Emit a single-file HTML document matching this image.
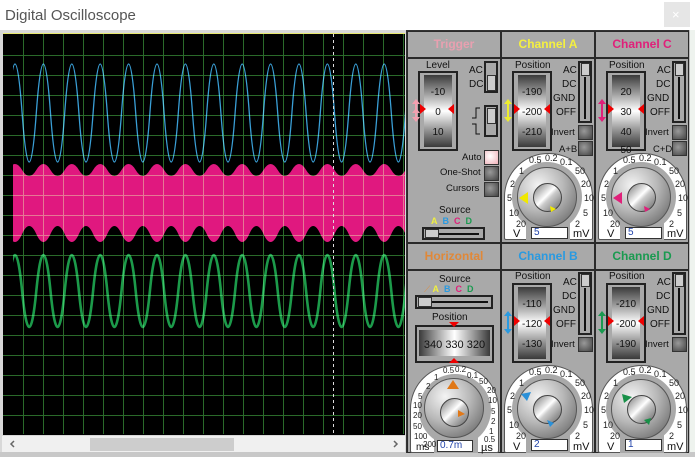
<!DOCTYPE html>
<html><head><meta charset="utf-8">
<style>
*{margin:0;padding:0;box-sizing:border-box}
body{width:695px;height:457px;overflow:hidden;background:#fff;font-family:"Liberation Sans",sans-serif;position:relative}
.a{position:absolute}
.t{position:absolute;font-size:10px;color:#111;white-space:nowrap;line-height:1}
.hd{position:absolute;font-weight:bold;font-size:12px;text-align:center;line-height:26px}
.col{position:absolute;border:1px solid #2a2a2a;background:#a9a9a9}
.gauge{position:absolute;background:#a9a9a9;border:2px solid #222}
.gin{position:absolute;left:4px;right:4px;top:2px;bottom:2px;background:linear-gradient(to bottom,#3a3a3a,#9a9a9a 25%,#fff 50%,#9a9a9a 75%,#3a3a3a)}
.gin.h{background:linear-gradient(to right,#3a3a3a,#a0a0a0 25%,#fff 50%,#a0a0a0 75%,#3a3a3a)}
.gl{position:absolute;font-size:10px;color:#111;width:100%;text-align:center;line-height:1}
.sl{position:absolute;border:2px solid #222;background:#a9a9a9}
.btn{position:absolute;width:15px;height:15px;border:1px solid #333;background:radial-gradient(circle at 40% 40%,#999,#444)}
.dial{position:absolute;width:89px;height:87px}
.dome{position:absolute;left:0;top:0;width:89px;height:87px;background:#fff;border:1px solid #555;border-radius:44px 44px 2px 2px/44px 44px 2px 2px}
.knob{position:absolute;width:60px;height:60px;border-radius:50%;background:radial-gradient(circle at 35% 30%,#f4f4f4,#b8b8b8 45%,#6a6a6a 90%);border:1px solid #555}
.cap{position:absolute;width:29px;height:29px;border-radius:50%;background:linear-gradient(135deg,#777,#fff 45%,#ccc 55%,#666);border:1px solid #444}
.n{position:absolute;font-size:9px;color:#222;line-height:1;white-space:nowrap}
.hz .n{font-size:8px}
.box{position:absolute;background:#fff;border:1px solid #333;font-size:10px;color:#2244aa;padding-left:2px;line-height:10px}
</style></head><body>
<div class="t" style="left:5px;top:8px;font-size:15px;color:#555">Digital Oscilloscope</div>
<div class="a" style="left:664px;top:2px;width:26px;height:25px;background:#e6e6e6"></div>
<div class="t" style="left:672px;top:8px;font-size:13px;color:#fff">×</div>
<div class="a" style="left:0;top:30px;width:407px;height:427px;background:#d8d8d8"></div>
<div class="a" style="left:689px;top:30px;width:6px;height:427px;background:#eef3ee;border-left:1px solid #bbb"></div>
<div class="a" style="left:0;top:452px;width:695px;height:5px;background:#c8c8c8"></div>
<svg class="a" style="left:0;top:0" width="407" height="457">
<defs><clipPath id="cp"><rect x="13" y="34" width="392" height="400"/></clipPath></defs>
<rect x="3" y="33" width="402" height="402" fill="#000"/>
<line x1="3" y1="33.5" x2="405" y2="33.5" stroke="#e8e870" stroke-width="1"/>
<g clip-path="url(#cp)">
<path fill="#e0187f" d="M7.9,170 Q15,158 22.1,170 t14.2,0 t14.2,0 t14.2,0 t14.2,0 t14.2,0 t14.2,0 t14.2,0 t14.2,0 t14.2,0 t14.2,0 t14.2,0 t14.2,0 t14.2,0 t14.2,0 t14.2,0 t14.2,0 t14.2,0 t14.2,0 t14.2,0 t14.2,0 t14.2,0 t14.2,0 t14.2,0 t14.2,0 t14.2,0 t14.2,0 t14.2,0 t14.2,0 L419.7,234 Q412.6,250 405.5,234 t-14.2,0 t-14.2,0 t-14.2,0 t-14.2,0 t-14.2,0 t-14.2,0 t-14.2,0 t-14.2,0 t-14.2,0 t-14.2,0 t-14.2,0 t-14.2,0 t-14.2,0 t-14.2,0 t-14.2,0 t-14.2,0 t-14.2,0 t-14.2,0 t-14.2,0 t-14.2,0 t-14.2,0 t-14.2,0 t-14.2,0 t-14.2,0 t-14.2,0 t-14.2,0 t-14.2,0 t-14.2,0 Z"/>
<path fill="none" stroke="#3a9fd6" stroke-width="1.3" d="M7.9,113 Q15,15 22.1,113 t14.2,0 t14.2,0 t14.2,0 t14.2,0 t14.2,0 t14.2,0 t14.2,0 t14.2,0 t14.2,0 t14.2,0 t14.2,0 t14.2,0 t14.2,0 t14.2,0 t14.2,0 t14.2,0 t14.2,0 t14.2,0 t14.2,0 t14.2,0 t14.2,0 t14.2,0 t14.2,0 t14.2,0 t14.2,0 t14.2,0 t14.2,0 t14.2,0"/>
<path fill="none" stroke="#1c9a4a" stroke-width="2.6" d="M7.9,291 Q15,219 22.1,291 t14.2,0 t14.2,0 t14.2,0 t14.2,0 t14.2,0 t14.2,0 t14.2,0 t14.2,0 t14.2,0 t14.2,0 t14.2,0 t14.2,0 t14.2,0 t14.2,0 t14.2,0 t14.2,0 t14.2,0 t14.2,0 t14.2,0 t14.2,0 t14.2,0 t14.2,0 t14.2,0 t14.2,0 t14.2,0 t14.2,0 t14.2,0 t14.2,0"/>
</g>
<g stroke="#2a6a2a" stroke-width="1" style="mix-blend-mode:screen">
<path d="M23.5,34V434M43.5,34V434M63.5,34V434M83.5,34V434M103.5,34V434M123.5,34V434M143.5,34V434M163.5,34V434M183.5,34V434M203.5,34V434M223.5,34V434M243.5,34V434M263.5,34V434M283.5,34V434M303.5,34V434M323.5,34V434M343.5,34V434M363.5,34V434M383.5,34V434M403.5,34V434"/>
<path d="M3,55.5H405M3,75.5H405M3,95.5H405M3,115.5H405M3,135.5H405M3,155.5H405M3,175.5H405M3,195.5H405M3,215.5H405M3,235.5H405M3,255.5H405M3,275.5H405M3,295.5H405M3,315.5H405M3,335.5H405M3,355.5H405M3,375.5H405M3,395.5H405M3,415.5H405"/>
</g>
<line x1="333.5" y1="34" x2="333.5" y2="434" stroke="#ddd" stroke-dasharray="3,3"/>
<rect x="2" y="436" width="403" height="16" fill="#f0f0f0"/>
<rect x="90" y="438" width="144" height="13" fill="#cdcdcd"/>
<path d="M14,441 l-3,3 3,3 M394,441 l3,3 -3,3" stroke="#666" stroke-width="1.5" fill="none"/>
</svg>

<div class="a" style="left:406px;top:30px;width:283px;height:423px;background:#a9a9a9;border:1px solid #333"></div>
<div class="col" style="left:407px;top:31px;width:94px;height:27px"></div>
<div class="col" style="left:501px;top:31px;width:94px;height:27px"></div>
<div class="col" style="left:595px;top:31px;width:94px;height:27px"></div>
<div class="col" style="left:407px;top:58px;width:94px;height:185px"></div>
<div class="col" style="left:501px;top:58px;width:94px;height:185px"></div>
<div class="col" style="left:595px;top:58px;width:94px;height:185px"></div>
<div class="col" style="left:407px;top:243px;width:94px;height:27px"></div>
<div class="col" style="left:501px;top:243px;width:94px;height:27px"></div>
<div class="col" style="left:595px;top:243px;width:94px;height:27px"></div>
<div class="col" style="left:407px;top:270px;width:94px;height:183px"></div>
<div class="col" style="left:501px;top:270px;width:94px;height:183px"></div>
<div class="col" style="left:595px;top:270px;width:94px;height:183px"></div>
<div class="hd" style="left:407px;top:31px;width:94px;color:#e8a0b0">Trigger</div>
<div class="hd" style="left:501px;top:31px;width:94px;color:#f4f040">Channel A</div>
<div class="hd" style="left:595px;top:31px;width:94px;color:#e0207a">Channel C</div>
<div class="hd" style="left:407px;top:243px;width:94px;color:#e08838">Horizontal</div>
<div class="hd" style="left:501px;top:243px;width:94px;color:#2a9ae0">Channel B</div>
<div class="hd" style="left:595px;top:243px;width:94px;color:#1a9a50">Channel D</div>

<div class="t" style="left:426px;top:61px">Level</div>
<div class="gauge" style="left:418px;top:71px;width:40px;height:80px"><div class="gin"><div class="gl" style="top:13px">-10</div><div class="gl" style="top:33px">0</div><div class="gl" style="top:53px">10</div></div></div>
<svg class="a" style="left:408px;top:96px" width="56" height="28"><path d="M8,12 l-4,5 8,0z M8,3 l-4,5 8,0z M4,21 l4,5 4,-5z" fill="#f2a0b0"/><rect x="7" y="6" width="2" height="16" fill="#f2a0b0"/><path d="M12,8 l6,5 -6,5z" fill="#e00"/><path d="M46,8 l-6,5 6,5z" fill="#e00"/></svg>
<div class="t" style="left:469px;top:66px">AC</div><div class="t" style="left:469px;top:80px">DC</div>
<div class="sl" style="left:484px;top:61px;width:14px;height:32px"><div class="a" style="left:1px;top:12px;width:9px;height:16px;background:#ccc;border:1px solid #333"></div></div>
<svg class="a" style="left:470px;top:106px" width="14" height="30"><path d="M10,2 H6 V12 H2 M2,18 H6 V28 H10" stroke="#111" fill="none"/></svg>
<div class="sl" style="left:484px;top:105px;width:14px;height:32px"><div class="a" style="left:1px;top:1px;width:9px;height:16px;background:#ccc;border:1px solid #333"></div></div>
<div class="t" style="left:462px;top:153px;font-size:9.5px">Auto</div>
<div class="btn" style="left:484px;top:150px;background:radial-gradient(circle at 40% 40%,#fff,#f0b0b8)"></div>
<div class="t" style="left:440px;top:168px;font-size:9.5px">One-Shot</div><div class="btn" style="left:484px;top:166px"></div>
<div class="t" style="left:446px;top:184px;font-size:9.5px">Cursors</div><div class="btn" style="left:484px;top:182px"></div>
<div class="t" style="left:439px;top:206px">Source</div>
<div class="t" style="left:431px;top:217px;font-size:9px;font-weight:bold"><span style="color:#f0f040">A</span>&nbsp; <span style="color:#2a9ae0">B</span>&nbsp; <span style="color:#e0207a">C</span>&nbsp; <span style="color:#1a9a50">D</span></div>
<div class="sl" style="left:422px;top:227px;width:63px;height:13px"><div class="a" style="left:3px;top:4px;width:52px;height:2px;background:#111"></div><div class="a" style="left:1px;top:0;width:14px;height:9px;background:#ccc;border:1px solid #333"></div></div>

<div class="t" style="left:515px;top:61px">Position</div>
<div class="gauge" style="left:512px;top:71px;width:40px;height:80px"><div class="gin"><div class="gl" style="top:13px">-190</div><div class="gl" style="top:33px">-200</div><div class="gl" style="top:53px">-210</div></div></div>
<svg class="a" style="left:502px;top:96px" width="56" height="28"><path d="M6,3 l-4,5 8,0z M2,21 l4,5 4,-5z" fill="#ecec30"/><rect x="5" y="6" width="2" height="16" fill="#ecec30"/><path d="M12,8 l6,5 -6,5z" fill="#e00"/><path d="M48,8 l-6,5 6,5z" fill="#e00"/></svg>
<div class="t" style="left:563px;top:66px">AC</div><div class="t" style="left:562px;top:80px">DC</div><div class="t" style="left:553px;top:94px">GND</div><div class="t" style="left:556px;top:108px">OFF</div>
<div class="sl" style="left:578px;top:61px;width:14px;height:62px"><div class="a" style="left:4px;top:14px;width:2px;height:42px;background:#111"></div><div class="a" style="left:1px;top:0;width:9px;height:13px;background:#ccc;border:1px solid #333"></div></div>
<div class="t" style="left:551px;top:128px;font-size:9.5px">Invert</div><div class="btn" style="left:578px;top:125px"></div>
<div class="t" style="left:559px;top:145px;font-size:9.5px">A+B</div><div class="btn" style="left:578px;top:141px"></div>

<div class="t" style="left:609px;top:61px">Position</div>
<div class="gauge" style="left:606px;top:71px;width:40px;height:80px"><div class="gin"><div class="gl" style="top:13px">20</div><div class="gl" style="top:33px">30</div><div class="gl" style="top:53px">40</div><div class="gl" style="top:71px">50</div></div></div>
<svg class="a" style="left:596px;top:96px" width="56" height="28"><path d="M6,3 l-4,5 8,0z M2,21 l4,5 4,-5z" fill="#e0207a"/><rect x="5" y="6" width="2" height="16" fill="#e0207a"/><path d="M12,8 l6,5 -6,5z" fill="#e00"/><path d="M48,8 l-6,5 6,5z" fill="#e00"/></svg>
<div class="t" style="left:657px;top:66px">AC</div><div class="t" style="left:656px;top:80px">DC</div><div class="t" style="left:647px;top:94px">GND</div><div class="t" style="left:650px;top:108px">OFF</div>
<div class="sl" style="left:672px;top:61px;width:14px;height:62px"><div class="a" style="left:4px;top:14px;width:2px;height:42px;background:#111"></div><div class="a" style="left:1px;top:0;width:9px;height:13px;background:#ccc;border:1px solid #333"></div></div>
<div class="t" style="left:645px;top:128px;font-size:9.5px">Invert</div><div class="btn" style="left:672px;top:125px"></div>
<div class="t" style="left:653px;top:145px;font-size:9.5px">C+D</div><div class="btn" style="left:672px;top:141px"></div>

<div class="t" style="left:439px;top:275px">Source</div>
<div class="t" style="left:424px;top:285px;font-size:9px;font-weight:bold"><span style="color:#d8904a;font-weight:normal">⟋</span> <span style="color:#f0f040">A</span>&nbsp; <span style="color:#2a9ae0">B</span>&nbsp; <span style="color:#e0207a">C</span>&nbsp; <span style="color:#1a9a50">D</span></div>
<div class="sl" style="left:415px;top:295px;width:78px;height:14px"><div class="a" style="left:3px;top:4px;width:68px;height:2px;background:#111"></div><div class="a" style="left:1px;top:0;width:14px;height:10px;background:#ccc;border:1px solid #333"></div></div>
<div class="t" style="left:432px;top:313px">Position</div>
<div class="gauge" style="left:415px;top:325px;width:79px;height:38px"><div class="gin h" style="left:2px;right:2px;top:3px;bottom:5px"><div class="gl" style="top:10px;font-size:11px">340 330 320</div></div></div>
<svg class="a" style="left:448px;top:322px" width="12" height="44"><path d="M1,0 h10 l-5,5z M1,41 h10 l-5,-5z" fill="#e00"/></svg>

<div class="t" style="left:515px;top:272px">Position</div>
<div class="gauge" style="left:512px;top:283px;width:40px;height:80px"><div class="gin"><div class="gl" style="top:13px">-110</div><div class="gl" style="top:33px">-120</div><div class="gl" style="top:53px">-130</div></div></div>
<svg class="a" style="left:502px;top:308px" width="56" height="28"><path d="M6,3 l-4,5 8,0z M2,21 l4,5 4,-5z" fill="#2a9ae0"/><rect x="5" y="6" width="2" height="16" fill="#2a9ae0"/><path d="M12,8 l6,5 -6,5z" fill="#e00"/><path d="M48,8 l-6,5 6,5z" fill="#e00"/></svg>
<div class="t" style="left:563px;top:278px">AC</div><div class="t" style="left:562px;top:292px">DC</div><div class="t" style="left:553px;top:306px">GND</div><div class="t" style="left:556px;top:320px">OFF</div>
<div class="sl" style="left:578px;top:272px;width:14px;height:63px"><div class="a" style="left:4px;top:14px;width:2px;height:43px;background:#111"></div><div class="a" style="left:1px;top:0;width:9px;height:13px;background:#ccc;border:1px solid #333"></div></div>
<div class="t" style="left:551px;top:340px;font-size:9.5px">Invert</div><div class="btn" style="left:578px;top:337px"></div>

<div class="t" style="left:609px;top:272px">Position</div>
<div class="gauge" style="left:606px;top:283px;width:40px;height:80px"><div class="gin"><div class="gl" style="top:13px">-210</div><div class="gl" style="top:33px">-200</div><div class="gl" style="top:53px">-190</div></div></div>
<svg class="a" style="left:596px;top:308px" width="56" height="28"><path d="M6,3 l-4,5 8,0z M2,21 l4,5 4,-5z" fill="#1a9a50"/><rect x="5" y="6" width="2" height="16" fill="#1a9a50"/><path d="M12,8 l6,5 -6,5z" fill="#e00"/><path d="M48,8 l-6,5 6,5z" fill="#e00"/></svg>
<div class="t" style="left:657px;top:278px">AC</div><div class="t" style="left:656px;top:292px">DC</div><div class="t" style="left:647px;top:306px">GND</div><div class="t" style="left:650px;top:320px">OFF</div>
<div class="sl" style="left:672px;top:272px;width:14px;height:63px"><div class="a" style="left:4px;top:14px;width:2px;height:43px;background:#111"></div><div class="a" style="left:1px;top:0;width:9px;height:13px;background:#ccc;border:1px solid #333"></div></div>
<div class="t" style="left:645px;top:340px;font-size:9.5px">Invert</div><div class="btn" style="left:672px;top:337px"></div>

<div class="dial" style="left:504px;top:153px">
 <div class="dome"></div>
 <div class="a" style="left:8px;top:9px;width:70px;height:70px;border-radius:50%;background:#a9a9a9"></div>
 <div class="a" style="left:22px;top:44px;width:44px;height:43px;background:#a9a9a9"></div>
 <div class="n" style="left:25px;top:3px">0.5</div><div class="n" style="left:41px;top:1px">0.2</div><div class="n" style="left:56px;top:5px">0.1</div><div class="n" style="left:71px;top:14px">50</div><div class="n" style="left:15px;top:14px">1</div><div class="n" style="left:6px;top:27px">2</div><div class="n" style="left:77px;top:27px">20</div><div class="n" style="left:3px;top:41px">5</div><div class="n" style="left:80px;top:41px">10</div><div class="n" style="left:5px;top:56px">10</div><div class="n" style="left:79px;top:56px">5</div><div class="n" style="left:12px;top:67px">20</div><div class="n" style="left:71px;top:67px">2</div>
 <div class="t" style="left:9px;top:76px;font-size:11px">V</div><div class="t" style="left:69px;top:76px;font-size:11px">mV</div>
 <div class="knob" style="left:13px;top:14px"></div><div class="cap" style="left:29px;top:30px"></div>
</div>
<div class="dial" style="left:598px;top:153px">
 <div class="dome"></div>
 <div class="a" style="left:8px;top:9px;width:70px;height:70px;border-radius:50%;background:#a9a9a9"></div>
 <div class="a" style="left:22px;top:44px;width:44px;height:43px;background:#a9a9a9"></div>
 <div class="n" style="left:25px;top:3px">0.5</div><div class="n" style="left:41px;top:1px">0.2</div><div class="n" style="left:56px;top:5px">0.1</div><div class="n" style="left:71px;top:14px">50</div><div class="n" style="left:15px;top:14px">1</div><div class="n" style="left:6px;top:27px">2</div><div class="n" style="left:77px;top:27px">20</div><div class="n" style="left:3px;top:41px">5</div><div class="n" style="left:80px;top:41px">10</div><div class="n" style="left:5px;top:56px">10</div><div class="n" style="left:79px;top:56px">5</div><div class="n" style="left:12px;top:67px">20</div><div class="n" style="left:71px;top:67px">2</div>
 <div class="t" style="left:9px;top:76px;font-size:11px">V</div><div class="t" style="left:69px;top:76px;font-size:11px">mV</div>
 <div class="knob" style="left:13px;top:14px"></div><div class="cap" style="left:29px;top:30px"></div>
</div>
<div class="dial" style="left:504px;top:365px;height:88px">
 <div class="dome" style="height:88px"></div>
 <div class="a" style="left:8px;top:9px;width:70px;height:70px;border-radius:50%;background:#a9a9a9"></div>
 <div class="a" style="left:22px;top:44px;width:44px;height:44px;background:#a9a9a9"></div>
 <div class="n" style="left:25px;top:3px">0.5</div><div class="n" style="left:41px;top:1px">0.2</div><div class="n" style="left:56px;top:5px">0.1</div><div class="n" style="left:71px;top:14px">50</div><div class="n" style="left:15px;top:14px">1</div><div class="n" style="left:6px;top:27px">2</div><div class="n" style="left:77px;top:27px">20</div><div class="n" style="left:3px;top:41px">5</div><div class="n" style="left:80px;top:41px">10</div><div class="n" style="left:5px;top:56px">10</div><div class="n" style="left:79px;top:56px">5</div><div class="n" style="left:12px;top:67px">20</div><div class="n" style="left:71px;top:67px">2</div>
 <div class="t" style="left:9px;top:77px;font-size:11px">V</div><div class="t" style="left:69px;top:77px;font-size:11px">mV</div>
 <div class="knob" style="left:13px;top:14px"></div><div class="cap" style="left:29px;top:30px"></div>
</div>
<div class="dial" style="left:598px;top:365px;height:88px">
 <div class="dome" style="height:88px"></div>
 <div class="a" style="left:8px;top:9px;width:70px;height:70px;border-radius:50%;background:#a9a9a9"></div>
 <div class="a" style="left:22px;top:44px;width:44px;height:44px;background:#a9a9a9"></div>
 <div class="n" style="left:25px;top:3px">0.5</div><div class="n" style="left:41px;top:1px">0.2</div><div class="n" style="left:56px;top:5px">0.1</div><div class="n" style="left:71px;top:14px">50</div><div class="n" style="left:15px;top:14px">1</div><div class="n" style="left:6px;top:27px">2</div><div class="n" style="left:77px;top:27px">20</div><div class="n" style="left:3px;top:41px">5</div><div class="n" style="left:80px;top:41px">10</div><div class="n" style="left:5px;top:56px">10</div><div class="n" style="left:79px;top:56px">5</div><div class="n" style="left:12px;top:67px">20</div><div class="n" style="left:71px;top:67px">2</div>
 <div class="t" style="left:9px;top:77px;font-size:11px">V</div><div class="t" style="left:69px;top:77px;font-size:11px">mV</div>
 <div class="knob" style="left:13px;top:14px"></div><div class="cap" style="left:29px;top:30px"></div>
</div>
<div class="dial hz" style="left:410px;top:365px;height:88px">
 <div class="dome" style="height:88px"></div>
 <div class="a" style="left:9px;top:9px;width:72px;height:72px;border-radius:50%;background:#a9a9a9"></div>
 <div class="a" style="left:24px;top:45px;width:44px;height:43px;background:#a9a9a9"></div>
 <div class="n" style="left:33px;top:2px">0.5</div><div class="n" style="left:45px;top:1px">0.2</div><div class="n" style="left:57px;top:7px">0.1</div><div class="n" style="left:24px;top:9px">1</div><div class="n" style="left:16px;top:18px">2</div><div class="n" style="left:8px;top:28px">5</div><div class="n" style="left:3px;top:37px">10</div><div class="n" style="left:3px;top:47px">20</div><div class="n" style="left:3px;top:58px">50</div><div class="n" style="left:4px;top:68px">100</div><div class="n" style="left:13px;top:76px">200</div>
 <div class="n" style="left:69px;top:13px">50</div><div class="n" style="left:77px;top:22px">20</div><div class="n" style="left:78px;top:32px">10</div><div class="n" style="left:81px;top:43px">5</div><div class="n" style="left:81px;top:53px">2</div><div class="n" style="left:79px;top:63px">1</div><div class="n" style="left:74px;top:71px">0.5</div>
 <div class="t" style="left:6px;top:78px;font-size:10px">ms</div><div class="t" style="left:71px;top:78px;font-size:11px">µs</div>
 <div class="knob" style="left:14px;top:13px"></div><div class="cap" style="left:30px;top:33px"></div>
</div>
<div class="box" style="left:531px;top:227px;width:37px;height:12px">5</div>
<div class="box" style="left:625px;top:227px;width:37px;height:12px">5</div>
<div class="box" style="left:531px;top:439px;width:37px;height:12px">2</div>
<div class="box" style="left:625px;top:439px;width:37px;height:12px">1</div>
<div class="box" style="left:437px;top:440px;width:36px;height:12px">0.7m</div>
<svg class="a" style="left:400px;top:150px" width="295" height="307">
<path d="M119,48 l9,-6 0,12z" fill="#f0e800"/><path d="M156,59 l-6,-3 1,6z" fill="#f0e800"/>
<path d="M213,48 l9,-6 0,12z" fill="#e0207a"/><path d="M250,59 l-6,-3 1,6z" fill="#e0207a"/>
<path d="M121,244 l10,-2 -4,9z" fill="#2a90d8"/><path d="M154,273 l-7,-3 3,7z" fill="#2a90d8"/>
<path d="M222,244 l10,3 -8,6z" fill="#189048"/><path d="M251,268 l-7,2 5,5z" fill="#189048"/>
<path d="M53,230 l-6,9 12,0z" fill="#e07818"/><path d="M65,264 l-7,-4 0,7z" fill="#e07818"/>
</svg>
</body></html>
